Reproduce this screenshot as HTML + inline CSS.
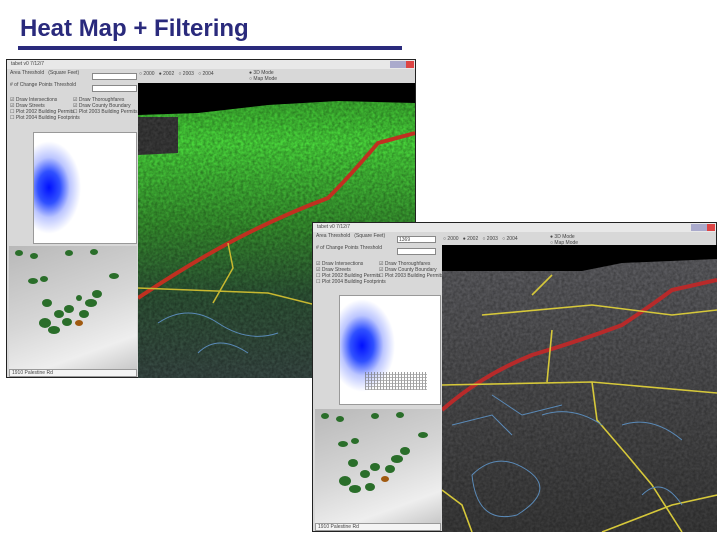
<!DOCTYPE html>
<html><head><meta charset="utf-8"><style>
*{margin:0;padding:0;box-sizing:border-box}
body{width:720px;height:540px;background:#fff;position:relative;overflow:hidden;font-family:"Liberation Sans",sans-serif}
.a{position:absolute}
.t{font-size:5px;color:#444;white-space:nowrap;position:absolute}
.win{position:absolute;background:#d8d8d8;border:1px solid #222}
</style></head><body>
<svg width="0" height="0" class="a"><filter id="n"><feTurbulence type="fractalNoise" baseFrequency="0.35" numOctaves="2"/><feColorMatrix values="0 0 0 0 0  0 0 0 0 0  0 0 0 0 0  0 0 0 -1.6 1.2"/></filter></svg>
<div class="a" style="left:20px;top:15px;font-size:24px;font-weight:bold;color:#2a2a7c">Heat Map + Filtering</div>
<div class="a" style="left:18px;top:46px;width:384px;height:4px;background:#2a2a7c"></div>

<!-- Window 1 -->
<div class="win" style="left:6px;top:59px;width:410px;height:319px">
 <div class="a" style="left:0;top:0;width:408px;height:9px;background:#e8e8e8"></div>
 <div class="t" style="left:4px;top:1px">tabet v0 7/12/7</div>
 <div class="a" style="left:383px;top:1px;width:24px;height:7px;background:linear-gradient(90deg,#aac 0 66%,#d44 66%)"></div>
 <div class="t" style="left:3px;top:10px">Area Threshold &nbsp; (Square Feet)</div>
 <div class="a" style="left:85px;top:13px;width:45px;height:7px;background:#fff;border:1px solid #888"></div>
 <div class="t" style="left:3px;top:22px"># of Change Points Threshold</div>
 <div class="a" style="left:85px;top:25px;width:45px;height:7px;background:#fff;border:1px solid #888"></div>
 <div class="t" style="left:3px;top:37px">☑ Draw Intersections<br>☑ Draw Streets<br>☐ Plot 2002 Building Permits<br>☐ Plot 2004 Building Footprints</div>
 <div class="t" style="left:66px;top:37px">☑ Draw Thoroughfares<br>☑ Draw County Boundary<br>☐ Plot 2003 Building Permits</div>
 <div class="a" style="left:26px;top:72px;width:104px;height:112px;background:#fff;border:1px solid #999;overflow:hidden">
  <div class="a" style="left:-25px;top:5px;width:100px;height:110px;background:radial-gradient(ellipse 32% 42% at 40% 45%,#0010ff 0,#3050ff 35%,rgba(120,140,255,.5) 65%,rgba(255,255,255,0) 100%)"></div>
 </div>
 <div class="a" style="left:2px;top:186px;width:128px;height:123px;background:linear-gradient(160deg,#b8b8b8,#d6d6d6 50%,#eee 80%,#c8c8c8)">
  <svg width="128" height="123" class="a">
   <g fill="#2a6e2a"><ellipse cx="10" cy="7" rx="4" ry="3"/><ellipse cx="25" cy="10" rx="4" ry="3"/><ellipse cx="60" cy="7" rx="4" ry="3"/><ellipse cx="85" cy="6" rx="4" ry="3"/><ellipse cx="24" cy="35" rx="5" ry="3"/><ellipse cx="35" cy="33" rx="4" ry="3"/><ellipse cx="38" cy="57" rx="5" ry="4"/><ellipse cx="36" cy="77" rx="6" ry="5"/><ellipse cx="45" cy="84" rx="6" ry="4"/><ellipse cx="58" cy="76" rx="5" ry="4"/><ellipse cx="50" cy="68" rx="5" ry="4"/><ellipse cx="60" cy="63" rx="5" ry="4"/><ellipse cx="75" cy="68" rx="5" ry="4"/><ellipse cx="82" cy="57" rx="6" ry="4"/><ellipse cx="88" cy="48" rx="5" ry="4"/><ellipse cx="105" cy="30" rx="5" ry="3"/><ellipse cx="70" cy="52" rx="3" ry="3"/></g>
   <ellipse cx="70" cy="77" rx="4" ry="3" fill="#a05a10"/>
  </svg>
 </div>
 <div class="a" style="left:2px;top:309px;width:128px;height:8px;background:#f4f4f4;border:1px solid #999"></div>
 <div class="t" style="left:5px;top:310px">1910 Palestine Rd</div>
 <div class="t" style="left:132px;top:11px">○ 2000 &nbsp; ● 2002 &nbsp; ○ 2003 &nbsp; ○ 2004</div>
 <div class="t" style="left:242px;top:10px">● 3D Mode<br>○ Map Mode</div>
 <div class="a" style="left:131px;top:23px;width:277px;height:295px;overflow:hidden;background:#000">
  <svg width="277" height="295" class="a">
   <defs><linearGradient id="g1" x1="0" y1="0" x2="0" y2="1"><stop offset="0" stop-color="#3cb030"/><stop offset=".15" stop-color="#4ad83c"/><stop offset=".45" stop-color="#36902e"/><stop offset=".7" stop-color="#2e5436"/><stop offset="1" stop-color="#384844"/></linearGradient></defs>
   <path d="M0 32 L60 30 L130 22 L200 18 L277 20 L277 295 L0 295Z" fill="url(#g1)"/>
   <path d="M0 34 L40 34 L40 70 L0 72Z" fill="#3a3a3a"/>
   <rect width="277" height="295" filter="url(#n)" opacity=".35"/>
   <path d="M0 215 Q60 175 110 150 Q150 130 190 115 Q210 95 240 60 L277 50" stroke="#c03020" stroke-width="4" fill="none"/>
   <path d="M0 205 L130 210 L250 240 L277 245 M200 165 L210 295 M90 160 L95 185 L75 220" stroke="#c8b830" stroke-width="1.5" fill="none"/>
   <path d="M20 240 q30 -20 60 0 t60 10 M60 270 q20 -20 50 0" stroke="#5a8ab8" stroke-width="1" fill="none"/>
  </svg>
 </div>
</div>

<!-- Window 2 -->
<div class="win" style="left:312px;top:222px;width:405px;height:310px">
 <div class="a" style="left:0;top:0;width:403px;height:9px;background:#e8e8e8"></div>
 <div class="t" style="left:4px;top:1px">tabet v0 7/12/7</div>
 <div class="a" style="left:378px;top:1px;width:24px;height:7px;background:linear-gradient(90deg,#aac 0 66%,#d44 66%)"></div>
 <div class="t" style="left:3px;top:10px">Area Threshold &nbsp; (Square Feet)</div>
 <div class="a" style="left:84px;top:13px;width:39px;height:7px;background:#fff;border:1px solid #888"></div>
 <div class="t" style="left:86px;top:14px">1369</div>
 <div class="t" style="left:3px;top:22px"># of Change Points Threshold</div>
 <div class="a" style="left:84px;top:25px;width:39px;height:7px;background:#fff;border:1px solid #888"></div>
 <div class="t" style="left:3px;top:38px">☑ Draw Intersections<br>☑ Draw Streets<br>☐ Plot 2002 Building Permits<br>☐ Plot 2004 Building Footprints</div>
 <div class="t" style="left:66px;top:38px">☑ Draw Thoroughfares<br>☑ Draw County Boundary<br>☐ Plot 2003 Building Permits</div>
 <div class="a" style="left:26px;top:72px;width:102px;height:110px;background:#fff;border:1px solid #999;overflow:hidden">
  <div class="a" style="left:-20px;top:0;width:100px;height:110px;background:radial-gradient(ellipse 33% 42% at 42% 45%,#0010ff 0,#3050ff 35%,rgba(120,140,255,.5) 65%,rgba(255,255,255,0) 100%)"></div>
  <div class="a" style="left:25px;top:76px;width:62px;height:18px;background:repeating-linear-gradient(90deg,#666 0 1px,transparent 1px 3px),repeating-linear-gradient(0deg,#888 0 1px,transparent 1px 3px);opacity:.6"></div>
 </div>
 <div class="a" style="left:2px;top:186px;width:126px;height:114px;background:linear-gradient(160deg,#b8b8b8,#d6d6d6 50%,#eee 80%,#c8c8c8)">
  <svg width="126" height="114" class="a">
   <g fill="#2a6e2a"><ellipse cx="10" cy="7" rx="4" ry="3"/><ellipse cx="25" cy="10" rx="4" ry="3"/><ellipse cx="60" cy="7" rx="4" ry="3"/><ellipse cx="85" cy="6" rx="4" ry="3"/><ellipse cx="28" cy="35" rx="5" ry="3"/><ellipse cx="40" cy="32" rx="4" ry="3"/><ellipse cx="38" cy="54" rx="5" ry="4"/><ellipse cx="30" cy="72" rx="6" ry="5"/><ellipse cx="40" cy="80" rx="6" ry="4"/><ellipse cx="55" cy="78" rx="5" ry="4"/><ellipse cx="50" cy="65" rx="5" ry="4"/><ellipse cx="60" cy="58" rx="5" ry="4"/><ellipse cx="75" cy="60" rx="5" ry="4"/><ellipse cx="82" cy="50" rx="6" ry="4"/><ellipse cx="90" cy="42" rx="5" ry="4"/><ellipse cx="108" cy="26" rx="5" ry="3"/></g>
   <ellipse cx="70" cy="70" rx="4" ry="3" fill="#a05a10"/>
  </svg>
 </div>
 <div class="a" style="left:2px;top:300px;width:126px;height:8px;background:#f4f4f4;border:1px solid #999"></div>
 <div class="t" style="left:5px;top:301px">1910 Palestine Rd</div>
 <div class="t" style="left:130px;top:13px">○ 2000 &nbsp; ● 2002 &nbsp; ○ 2003 &nbsp; ○ 2004</div>
 <div class="t" style="left:237px;top:11px">● 3D Mode<br>○ Map Mode</div>
 <div class="a" style="left:129px;top:22px;width:275px;height:287px;overflow:hidden;background:#000">
  <svg width="275" height="287" class="a">
   <defs><linearGradient id="g2" x1="0" y1="0" x2="0" y2="1"><stop offset="0" stop-color="#5c5c60"/><stop offset=".4" stop-color="#4e4e50"/><stop offset="1" stop-color="#3a3a3a"/></linearGradient></defs>
   <path d="M0 26 L140 26 L180 18 L275 14 L275 287 L0 287Z" fill="url(#g2)"/>
   <rect width="275" height="287" y="20" filter="url(#n)" opacity=".3"/>
   <path d="M0 165 Q40 130 90 110 Q140 95 180 80 Q210 60 230 45 L275 35" stroke="#b82a2a" stroke-width="4" fill="none"/>
   <path d="M0 140 L150 137 L275 148 M150 137 L155 175 L185 210 L210 240 L240 287 M110 85 L105 137 M0 245 L20 260 L30 287 M160 287 L230 260 L275 250 M90 50 L110 30 M40 70 L150 60 L230 70 L275 65" stroke="#d6c83a" stroke-width="1.6" fill="none"/>
   <path d="M30 230 q25 -25 55 -5 t-10 45 q-40 10 -45 -40 M100 170 q30 -10 60 10 M10 180 l40 -10 l20 20 M180 180 q30 -10 60 15 M200 250 q20 -20 40 10 M50 150 l30 20 l40 -10" stroke="#5a8ab8" stroke-width="1" fill="none"/>
  </svg>
 </div>
</div>
</body></html>
